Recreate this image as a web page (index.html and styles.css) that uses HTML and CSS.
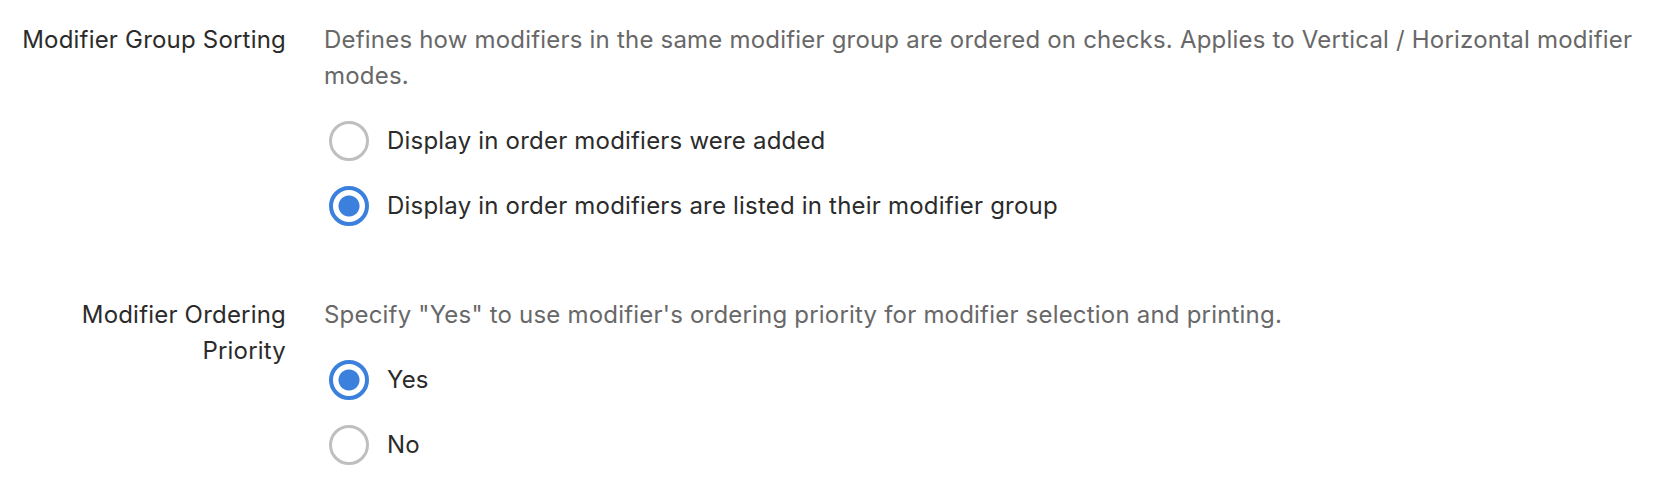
FILE: index.html
```html
<!DOCTYPE html>
<html lang="en">
<head>
<meta charset="utf-8">
<title>Modifier settings</title>
<link rel="stylesheet" href="styles.css">
</head>
<body>
<div class="settings">
  <div class="setting">
    <div class="label">Modifier Group Sorting</div>
    <div class="content">
      <p class="desc">Defines how modifiers in the same modifier group are ordered on checks. Applies to Vertical / Horizontal modifier modes.</p>
      <div class="options">
        <label class="option"><span class="radio"></span><span class="opt-text">Display in order modifiers were added</span></label>
        <label class="option"><span class="radio checked"></span><span class="opt-text">Display in order modifiers are listed in their modifier group</span></label>
      </div>
    </div>
  </div>
  <div class="setting second">
    <div class="label">Modifier Ordering Priority</div>
    <div class="content">
      <p class="desc">Specify "Yes" to use modifier's ordering priority for modifier selection and printing.</p>
      <div class="options">
        <label class="option"><span class="radio checked"></span><span class="opt-text">Yes</span></label>
        <label class="option"><span class="radio"></span><span class="opt-text">No</span></label>
      </div>
    </div>
  </div>
</div>
</body>
</html>
```
FILE: styles.css
```css
html, body {
  margin: 0;
  padding: 0;
  background: #ffffff;
}
body {
  font-family: Inter, "Noto Sans", sans-serif;
  font-size: 24px;
  line-height: 36px;
  letter-spacing: 0.2px;
  color: #2b2b2b;
}
.settings {
  padding: 22px 20px 0 20px;
}
.setting {
  display: grid;
  grid-template-columns: 266px 1fr;
  column-gap: 38px;
}
.setting.second {
  margin-top: 71px;
}
.label {
  text-align: right;
  color: #2b2b2b;
}
.desc {
  margin: 0;
  color: #686868;
}
.options {
  display: flex;
  flex-direction: column;
  gap: 25px;
  margin-top: 27px;
  padding-left: 5px;
}
.option {
  display: flex;
  align-items: center;
  gap: 18px;
  height: 40px;
}
.radio {
  box-sizing: border-box;
  width: 40px;
  height: 40px;
  border-radius: 50%;
  border: 3px solid #bfbfbf;
  flex: none;
}
.radio.checked {
  border: 4px solid #3b80dd;
  background: radial-gradient(circle, #3b80dd 0 10px, #ffffff 11px);
}
.opt-text {
  color: #2b2b2b;
}
```
